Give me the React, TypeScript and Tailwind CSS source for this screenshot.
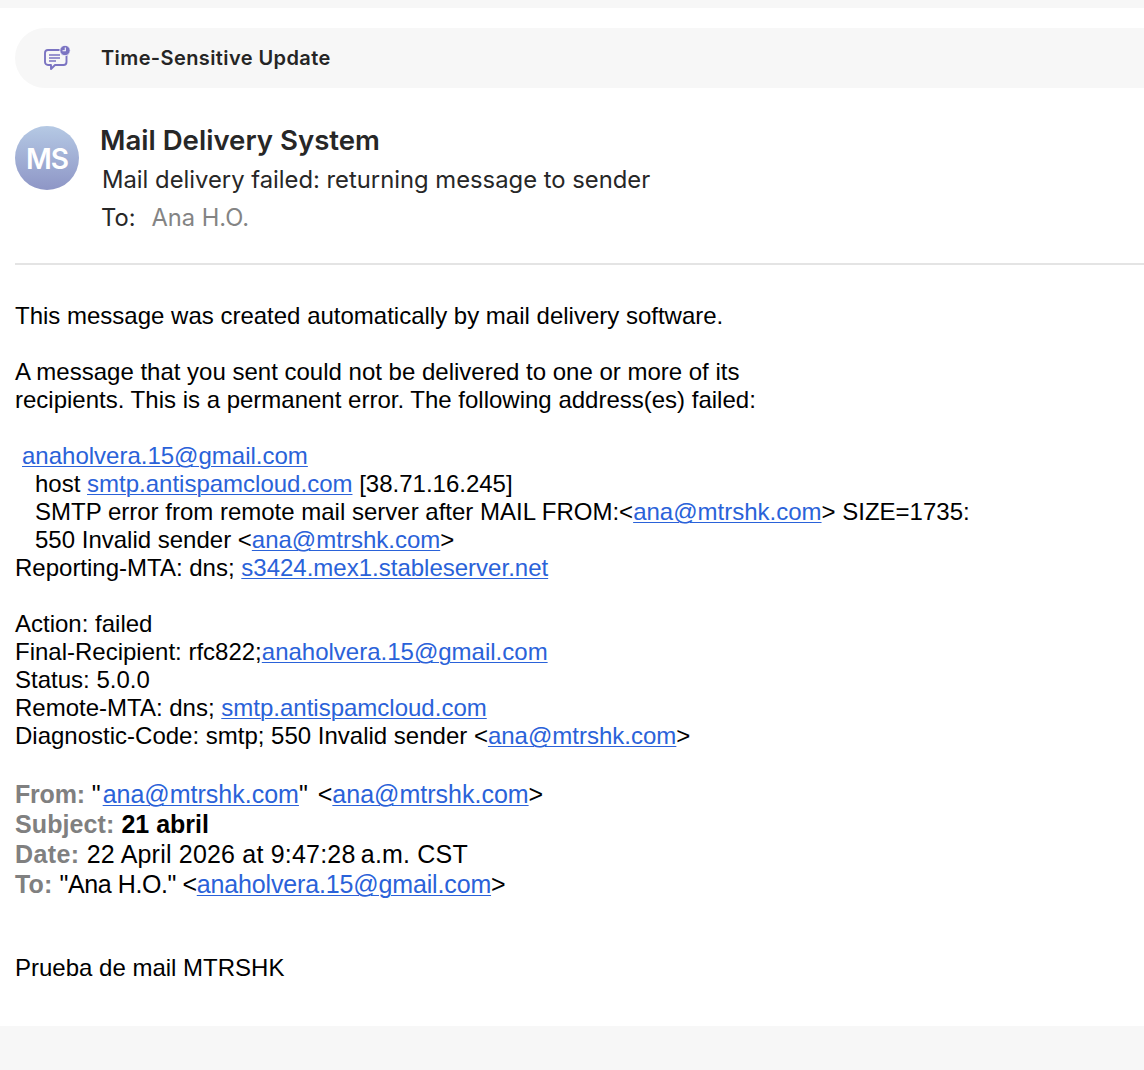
const Mail = ({ children }: { children: React.ReactNode }) => (
  <a className="text-[#2a62d9] underline decoration-1 underline-offset-[2px]">{children}</a>
);

const MetaLabel = ({ children, className }: { children: React.ReactNode; className?: string }) => (
  <span className={`font-bold text-[#808080] ${className ?? ""}`}>{children}</span>
);

const BubbleIcon = () => (
  <svg width="28" height="26" viewBox="0 0 28 26" fill="none">
    <path
      d="M5 5h15.5a3 3 0 0 1 3 3v9a3 3 0 0 1-3 3H12l-4 4v-4H5a3 3 0 0 1-3-3V8a3 3 0 0 1 3-3z"
      stroke="#7b74c2"
      strokeWidth="1.9"
      strokeLinejoin="round"
    />
    <path d="M6 10h11M6 13h11M6 16h7" stroke="#7b74c2" strokeWidth="1.3" />
    <circle cx="22" cy="5.5" r="5.2" fill="#7b74c2" stroke="#fff" strokeWidth="0.8" />
    <path d="M22.3 2.6v3.2h-2.8" stroke="#fff" strokeWidth="1.1" fill="none" />
  </svg>
);

export default function App() {
  return (
    <div className="w-[1144px] h-[1070px] overflow-hidden bg-white flex flex-col font-['Inter',sans-serif]">
      <div className="h-2 bg-[#f7f7f7]" />

      <div className="pl-[15px] pt-5">
        <div className="flex items-center h-[60px] rounded-l-[30px] bg-[#f7f7f7] pl-7">
          <BubbleIcon />
          <span className="ml-[30px] text-[20px] font-semibold tracking-[0.4px] text-[#252525]">
            Time-Sensitive Update
          </span>
        </div>
      </div>

      <div className="ml-[15px] flex h-[177px] border-b-2 border-[#e4e4e4] pt-[38px]">
        <div className="w-16 h-16 pt-[1px] rounded-full bg-gradient-to-b from-[#b5c9e4] to-[#8e96c6] flex items-center justify-center text-white text-[28px] font-semibold tracking-[-1px]">
          MS
        </div>
        <div className="ml-[21px] text-[#272727]">
          <div className="text-[27.6px] leading-[32px] font-semibold -mt-[2px]">Mail Delivery System</div>
          <div className="ml-[2px] mt-[8px] text-[23.8px] leading-[32px]">
            Mail delivery failed: returning message to sender
          </div>
          <div className="ml-[1px] mt-[6px] text-[23.7px] leading-[32px]">
            To:<span className="ml-[16px] text-[#848484]">Ana H.O.</span>
          </div>
        </div>
      </div>

      <div className="pl-[15px] pt-[37px] text-[24px] leading-[28px] text-black font-['Liberation_Sans',sans-serif] whitespace-nowrap">
        <div>This message was created automatically by mail delivery software.</div>
        <div className="h-7" />
        <div>A message that you sent could not be delivered to one or more of its</div>
        <div>recipients. This is a permanent error. The following address(es) failed:</div>
        <div className="h-7" />
        <div className="pl-[7px]">
          <Mail>anaholvera.15@gmail.com</Mail>
        </div>
        <div className="pl-5">
          host <Mail>smtp.antispamcloud.com</Mail> [38.71.16.245]
        </div>
        <div className="pl-5">
          SMTP error from remote mail server after MAIL FROM:&lt;<Mail>ana@mtrshk.com</Mail>&gt; SIZE=1735:
        </div>
        <div className="pl-5">
          550 Invalid sender &lt;<Mail>ana@mtrshk.com</Mail>&gt;
        </div>
        <div>
          Reporting-MTA: dns; <Mail>s3424.mex1.stableserver.net</Mail>
        </div>
        <div className="h-7" />
        <div>Action: failed</div>
        <div>
          Final-Recipient: rfc822;<Mail>anaholvera.15@gmail.com</Mail>
        </div>
        <div>Status: 5.0.0</div>
        <div>
          Remote-MTA: dns; <Mail>smtp.antispamcloud.com</Mail>
        </div>
        <div>
          Diagnostic-Code: smtp; 550 Invalid sender &lt;<Mail>ana@mtrshk.com</Mail>&gt;
        </div>
        <div className="h-[29px]" />
        <div className="leading-[30px] text-[25px]">
          <div>
            <MetaLabel className="tracking-[-0.2px]">From:</MetaLabel> <span className="tracking-[2px]">"</span>
            <Mail>ana@mtrshk.com</Mail>
            <span className="tracking-[3px]">"</span> &lt;<Mail>ana@mtrshk.com</Mail>&gt;
          </div>
          <div>
            <MetaLabel className="tracking-[0.1px]">Subject:</MetaLabel> <span className="font-bold">21 abril</span>
          </div>
          <div className="tracking-[0.2px]">
            <MetaLabel className="tracking-[0.4px]">Date:</MetaLabel> 22 April 2026 at 9:47:28{"\u202f"}a.m. CST
          </div>
          <div className="tracking-[-0.15px]">
            <MetaLabel className="tracking-[0.2px]">To:</MetaLabel> <span className="tracking-[-0.4px]">"Ana H.O." &lt;</span>
            <Mail>anaholvera.15@gmail.com</Mail>&gt;
          </div>
        </div>
        <div className="h-[55px]" />
        <div>Prueba de mail MTRSHK</div>
      </div>

      <div className="mt-auto h-[44px] bg-[#f7f7f7]" />
    </div>
  );
}
